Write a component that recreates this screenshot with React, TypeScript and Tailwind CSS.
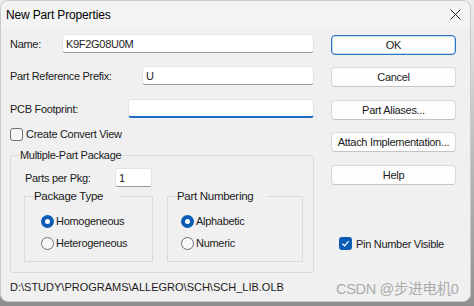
import React from 'react'

const ui = "font-['Liberation_Sans',Arial,sans-serif] text-[11px] leading-[14px] text-[#1b1b1b] tracking-[-0.3px]"

function Field({ value, focused, className }: { value?: string; focused?: boolean; className?: string }) {
  return (
    <div
      className={`h-[19px] bg-white rounded-[3px] border border-[#e3e3e3] flex items-center pl-[3px] ${
        focused ? 'border-b-2 border-b-[#1f6cc0]' : 'border-b-[#9a9a9a]'
      } ${className ?? ''}`}
    >
      {value}
    </div>
  )
}

function Button({ label, primary, className }: { label: string; primary?: boolean; className?: string }) {
  return (
    <div
      className={`h-[20px] rounded-[4px] flex items-center justify-center bg-[#fdfdfd] border ${
        primary
          ? 'border-[#2a74c6] shadow-[inset_0_0_0_1px_#c9dcf2]'
          : 'border-[#d9d9d9] border-b-[#c4c4c4]'
      } ${className ?? ''}`}
    >
      {label}
    </div>
  )
}

function Radio({ label, checked, className }: { label: string; checked?: boolean; className?: string }) {
  return (
    <div className={`h-[16px] flex items-center gap-[2px] ${className ?? ''}`}>
      {checked ? (
        <span className="w-[13px] h-[13px] rounded-full bg-[#0a5cb4] flex items-center justify-center">
          <span className="w-[5px] h-[5px] rounded-full bg-white" />
        </span>
      ) : (
        <span className="w-[13px] h-[13px] rounded-full border border-[#707070] bg-[#f7f7f7]" />
      )}
      <span>{label}</span>
    </div>
  )
}

export default function App() {
  return (
    <div className="w-[474px] h-[306px] bg-linear-to-b from-[#ececec] to-[#8f8f8f] overflow-hidden">
      <div className={`w-[471px] h-[302px] rounded-[8px] border border-[#c9c9c9] bg-[#f0f0f0] flex flex-col ${ui}`}>
        <div className="h-[27px] flex items-center justify-between pl-[5px] pr-[9px] bg-[#f3f3f3] rounded-t-[8px]">
          <span className="text-[12px] tracking-[-0.15px] text-black">New Part Properties</span>
          <svg width="11" height="11" viewBox="0 0 11 11" className="text-[#222]">
            <path d="M0.5 0.5 L10.5 10.5 M10.5 0.5 L0.5 10.5" stroke="currentColor" strokeWidth="1" />
          </svg>
        </div>

        <div className="flex pl-[9px] pt-[6px]">
          <div className="w-[304px] flex flex-col">
            <div className="flex items-center">
              <span className="w-[52px]">Name:</span>
              <Field value="K9F2G08U0M" className="flex-1" />
            </div>
            <div className="flex items-center mt-[13px]">
              <span className="w-[132px]">Part Reference Prefix:</span>
              <Field value="U" className="flex-1" />
            </div>
            <div className="flex items-center mt-[14px]">
              <span className="w-[118px]">PCB Footprint:</span>
              <Field focused className="flex-1" />
            </div>
            <div className="flex items-center gap-[3px] mt-[9px] h-[14px]">
              <span className="w-[13px] h-[13px] rounded-[3px] border border-[#707070] bg-[#f6f6f6]" />
              <span>Create Convert View</span>
            </div>

            <fieldset className="mt-[7px] border border-[#dadada] rounded-[2px] w-[304px] pb-[10px]">
              <legend className="ml-[8px] px-[1px]">Multiple-Part Package</legend>
              <div className="pl-[13px]">
                <div className="flex items-center mt-[6px]">
                  <span className="w-[91px] pl-[1px]">Parts per Pkg:</span>
                  <Field value="1" className="w-[37px]" />
                </div>
                <div className="flex gap-[14px] mt-[2px]">
                  <fieldset className="w-[129px] border border-[#dadada] pl-[16px] pb-[10px]">
                    <legend className="ml-[8px] px-[1px] -translate-x-[16px] text-[11.5px]">Package Type</legend>
                    <Radio label="Homogeneous" checked className="mt-[10px]" />
                    <Radio label="Heterogeneous" className="mt-[6px]" />
                  </fieldset>
                  <fieldset className="w-[136px] border border-[#dadada] pl-[13px] pb-[10px]">
                    <legend className="ml-[8px] px-[1px] -translate-x-[13px] text-[11.5px]">Part Numbering</legend>
                    <Radio label="Alphabetic" checked className="mt-[10px]" />
                    <Radio label="Numeric" className="mt-[6px]" />
                  </fieldset>
                </div>
              </div>
            </fieldset>

            <div className="mt-[7px] tracking-[0px]">D:\STUDY\PROGRAMS\ALLEGRO\SCH\SCH_LIB.OLB</div>
          </div>

          <div className="ml-[17px] w-[125px] flex flex-col pt-[1px]">
            <Button label="OK" primary />
            <Button label="Cancel" className="mt-[12px]" />
            <Button label="Part Aliases..." className="mt-[13px]" />
            <Button label="Attach Implementation..." className="mt-[12px]" />
            <Button label="Help" className="mt-[13px]" />
            <div className="flex items-center gap-[4px] mt-[52px] pl-[8px] h-[13px]">
              <span className="w-[13px] h-[13px] rounded-[3px] bg-[#0a5cb4] flex items-center justify-center">
                <svg width="9" height="9" viewBox="0 0 9 9">
                  <path d="M1.5 4.8 L3.6 6.8 L7.6 2.2" fill="none" stroke="white" strokeWidth="1.2" />
                </svg>
              </span>
              <span>Pin Number Visible</span>
            </div>
            <div className="mt-[30px] pl-[5px] whitespace-nowrap font-['Liberation_Sans','Noto_Sans_CJK_SC',sans-serif] text-[14.5px] leading-[18px] tracking-[-0.3px] text-[#ababab]">
              CSDN @步进电机0
            </div>
          </div>
        </div>
      </div>
    </div>
  )
}
